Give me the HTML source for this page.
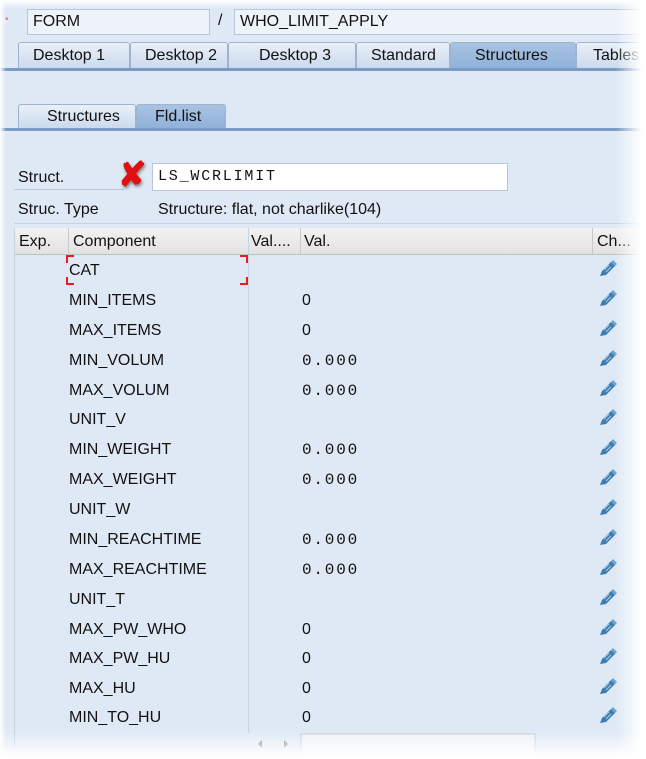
<!DOCTYPE html>
<html><head><meta charset="utf-8"><style>
*{margin:0;padding:0;box-sizing:border-box}
body{width:646px;height:759px;overflow:hidden;background:#fff;font-family:"Liberation Sans",sans-serif;font-size:15px;color:#111;position:relative}
.bg{position:absolute;left:0;top:0;width:646px;height:759px;background:#dfe9f5}
.abs{position:absolute}
.field{position:absolute;background:#eef3f9;border:1px solid #b9c6d6;height:26px;padding:3px 5px;font-size:16px}
.tab{position:absolute;top:42px;height:27px;background:linear-gradient(#e9f0f8,#c9d9ec);border:1px solid #9fb4cc;border-bottom:none;border-radius:3px 3px 0 0;padding:4px 0 0 14px;font-size:16px}
.tab.act{background:linear-gradient(#a9c3e2,#8fb0d8)}
.line{position:absolute;left:0;width:646px;height:3px;background:#7b9bc6}
.mono{font-family:"Liberation Mono",monospace;letter-spacing:1.8px}
.row{position:absolute;left:69px;font-size:16px}
.val{position:absolute;left:302px;font-size:16px}
</style></head><body>
<div class="bg"></div>
<div class="abs" style="left:5px;top:14px;color:#e08080;font-size:10px">•</div>
<div class="field" style="left:27px;top:9px;width:183px">FORM</div>
<div class="abs" style="left:218px;top:12px;font-size:16px">/</div>
<div class="field" style="left:234px;top:9px;width:420px">WHO_LIMIT_APPLY</div>

<div class="tab" style="left:18px;width:112px">Desktop 1</div>
<div class="tab" style="left:130px;width:98px">Desktop 2</div>
<div class="tab" style="left:228px;width:128px;padding-left:30px">Desktop 3</div>
<div class="tab" style="left:356px;width:94px">Standard</div>
<div class="tab act" style="left:450px;width:126px;padding-left:24px">Structures</div>
<div class="tab" style="left:576px;width:90px;padding-left:16px">Tables</div>
<div class="line" style="top:68px"></div>

<div class="tab" style="left:18px;top:104px;width:118px;padding-left:28px;height:25px;padding-top:3px">Structures</div>
<div class="tab act" style="left:136px;top:104px;width:90px;padding-left:18px;height:25px;padding-top:3px">Fld.list</div>
<div class="line" style="top:128px"></div>

<div class="abs" style="left:18px;top:169px;font-size:16px">Struct.</div>
<div class="abs" style="left:14px;top:189px;width:110px;height:1px;background:#b9c6d6"></div>
<div class="abs" style="left:118px;top:158px;color:#e01010;font-size:34px;font-weight:bold;text-shadow:1px 2px 3px #777;line-height:34px">✘</div>
<div class="abs mono" style="left:152px;top:163px;width:356px;height:28px;background:#fff;border:1px solid #b9c6d6;padding:4px 5px;font-size:15px">LS_WCRLIMIT</div>
<div class="abs" style="left:18px;top:201px;font-size:16px">Struc. Type</div>
<div class="abs" style="left:158px;top:201px;font-size:16px">Structure: flat, not charlike(104)</div>

<div class="abs" style="left:14px;top:223px;width:632px;height:1px;background:#c6d3e2"></div>
<div class="abs" style="left:14px;top:228px;width:632px;height:27px;background:linear-gradient(#f2f2f2,#e2e2e2);border-bottom:1px solid #c0c0c0"></div>
<div class="abs" style="left:14px;top:228px;width:1px;height:520px;background:#c8d3e0"></div>
<div class="abs" style="left:68px;top:228px;width:1px;height:27px;background:#c8c8c8"></div>
<div class="abs" style="left:248px;top:228px;width:1px;height:505px;background:#c8d3e0"></div>
<div class="abs" style="left:300px;top:228px;width:1px;height:27px;background:#c8c8c8"></div>
<div class="abs" style="left:592px;top:228px;width:1px;height:27px;background:#c8c8c8"></div>
<div class="abs" style="left:19px;top:233px;font-size:16px">Exp.</div>
<div class="abs" style="left:73px;top:233px;font-size:16px">Component</div>
<div class="abs" style="left:251px;top:233px;font-size:16px">Val....</div>
<div class="abs" style="left:304px;top:233px;font-size:16px">Val.</div>
<div class="abs" style="left:597px;top:233px;font-size:16px">Ch...</div>

<div class="abs" style="left:66px;top:255px;width:182px;height:30px;border:2px solid #e02020;clip-path:polygon(0 0,8px 0,8px 2px,2px 2px,2px 8px,0 8px,0 calc(100% - 8px),2px calc(100% - 8px),2px calc(100% - 2px),8px calc(100% - 2px),8px 100%,0 100%,0 0,100% 0,100% 100%,calc(100% - 8px) 100%,calc(100% - 8px) calc(100% - 2px),calc(100% - 2px) calc(100% - 2px),calc(100% - 2px) calc(100% - 8px),100% calc(100% - 8px),100% 8px,calc(100% - 2px) 8px,calc(100% - 2px) 2px,calc(100% - 8px) 2px,calc(100% - 8px) 0,100% 0)"></div>

<div class="row" style="top:262px">CAT</div>
<div class="row" style="top:292px">MIN_ITEMS</div><div class="val" style="top:292px">0</div>
<div class="row" style="top:322px">MAX_ITEMS</div><div class="val" style="top:322px">0</div>
<div class="row" style="top:352px">MIN_VOLUM</div><div class="val mono" style="top:352px">0.000</div>
<div class="row" style="top:382px">MAX_VOLUM</div><div class="val mono" style="top:382px">0.000</div>
<div class="row" style="top:411px">UNIT_V</div>
<div class="row" style="top:441px">MIN_WEIGHT</div><div class="val mono" style="top:441px">0.000</div>
<div class="row" style="top:471px">MAX_WEIGHT</div><div class="val mono" style="top:471px">0.000</div>
<div class="row" style="top:501px">UNIT_W</div>
<div class="row" style="top:531px">MIN_REACHTIME</div><div class="val mono" style="top:531px">0.000</div>
<div class="row" style="top:561px">MAX_REACHTIME</div><div class="val mono" style="top:561px">0.000</div>
<div class="row" style="top:591px">UNIT_T</div>
<div class="row" style="top:621px">MAX_PW_WHO</div><div class="val" style="top:621px">0</div>
<div class="row" style="top:650px">MAX_PW_HU</div><div class="val" style="top:650px">0</div>
<div class="row" style="top:680px">MAX_HU</div><div class="val" style="top:680px">0</div>
<div class="row" style="top:709px">MIN_TO_HU</div><div class="val" style="top:709px">0</div>

<svg class="abs" style="left:0;top:0" width="646" height="759">
<defs><g id="p"><path d="M2 16 L4 11 L13 2 L17 6 L8 15 Z" fill="#3d7db0"/><path d="M13 2 L15 0 L19 4 L17 6Z" fill="#6fa3cc"/><path d="M6 10 L11 5 M8 12 L13 7" stroke="#a8cbe6" stroke-width="1"/></g></defs>
<use href="#p" x="598" y="260"/><use href="#p" x="598" y="290"/><use href="#p" x="598" y="320"/><use href="#p" x="598" y="350"/><use href="#p" x="598" y="380"/><use href="#p" x="598" y="409"/><use href="#p" x="598" y="439"/><use href="#p" x="598" y="469"/><use href="#p" x="598" y="499"/><use href="#p" x="598" y="529"/><use href="#p" x="598" y="559"/><use href="#p" x="598" y="589"/><use href="#p" x="598" y="619"/><use href="#p" x="598" y="648"/><use href="#p" x="598" y="678"/><use href="#p" x="598" y="707"/>
<path d="M262 740 L258 744 L262 748Z M284 740 L288 744 L284 748Z" fill="#888"/>
<rect x="301" y="734" width="234" height="24" fill="#eef2f7" stroke="#c0c8d2"/>
</svg>

<div class="abs" style="left:616px;top:0;width:30px;height:759px;background:linear-gradient(90deg,rgba(255,255,255,0),#fff 85%)"></div>
<div class="abs" style="left:0;top:732px;width:646px;height:27px;background:linear-gradient(rgba(255,255,255,0),#fff 90%)"></div>
<div class="abs" style="left:0;top:0;width:646px;height:8px;background:linear-gradient(#fff,rgba(255,255,255,0))"></div>
<div class="abs" style="left:0;top:0;width:6px;height:759px;background:linear-gradient(90deg,#fff,rgba(255,255,255,0))"></div>
</body></html>
